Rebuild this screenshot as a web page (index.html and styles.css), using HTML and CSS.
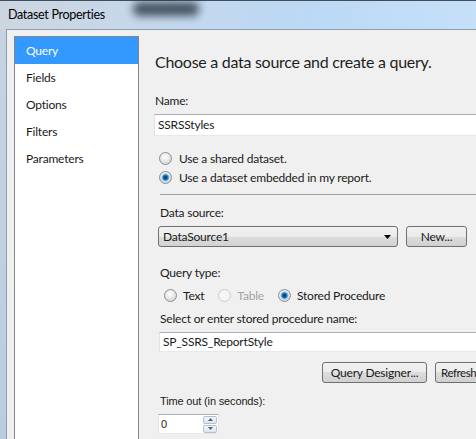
FILE: index.html
```html
<!DOCTYPE html>
<html>
<head>
<meta charset="utf-8">
<title>Dataset Properties</title>
<link rel="stylesheet" href="styles.css">
</head>
<body>
<div class="window">
  <div class="titlebar">
    <span class="title">Dataset Properties</span>
    <span class="blur"></span>
  </div>
  <div class="frame">
    <div class="client">
      <ul class="nav">
        <li class="nav-item selected">Query</li>
        <li class="nav-item">Fields</li>
        <li class="nav-item">Options</li>
        <li class="nav-item">Filters</li>
        <li class="nav-item">Parameters</li>
      </ul>
      <div class="content">
        <h1 class="heading">Choose a data source and create a query.</h1>
        <div class="label name-label">Name:</div>
        <div class="textbox name-box">SSRSStyles</div>
        <div class="radio-list">
          <div class="radio-row"><span class="radio"></span><span>Use a shared dataset.</span></div>
          <div class="radio-row"><span class="radio on"></span><span>Use a dataset embedded in my report.</span></div>
        </div>
        <div class="separator"></div>
        <div class="section">
          <div class="label ds-label">Data source:</div>
          <div class="ds-row">
            <div class="combo"><span>DataSource1</span>
              <svg class="combo-arrow" width="7" height="4" viewBox="0 0 7 4"><polygon points="0,0 7,0 3.5,4" fill="#000"/></svg>
            </div>
            <div class="button new-btn">New...</div>
          </div>
          <div class="label qt-label">Query type:</div>
          <div class="qt-row">
            <div class="radio-opt"><span class="radio"></span><span>Text</span></div>
            <div class="radio-opt disabled"><span class="radio dis"></span><span>Table</span></div>
            <div class="radio-opt"><span class="radio on"></span><span>Stored Procedure</span></div>
          </div>
          <div class="label sp-label">Select or enter stored procedure name:</div>
          <div class="textbox sp-box">SP_SSRS_ReportStyle</div>
          <div class="btn-row">
            <div class="button qd-btn">Query Designer...</div>
            <div class="button rf-btn"><span>Refresh</span></div>
          </div>
          <div class="label ms-label">Time out (in seconds):</div>
          <div class="spin">
            <span class="spin-val">0</span>
            <div class="spin-btns">
              <div class="spin-btn"><svg width="5" height="3" viewBox="0 0 5 3"><polygon points="0,3 5,3 2.5,0" fill="#4d617d"/></svg></div>
              <div class="spin-btn"><svg width="5" height="3" viewBox="0 0 5 3"><polygon points="0,0 5,0 2.5,3" fill="#4d617d"/></svg></div>
            </div>
          </div>
        </div>
      </div>
    </div>
  </div>
</div>
</body>
</html>
```
FILE: styles.css
```css
html, body {
  margin: 0;
  padding: 0;
}
body {
  width: 476px;
  height: 439px;
  overflow: hidden;
  font-family: Lato, "Liberation Sans", sans-serif;
  font-size: 12px;
  letter-spacing: -0.2px;
  color: #1a1a1a;
  background: #c9d5e1;
}
.window {
  width: 530px;
  height: 439px;
  display: flex;
  flex-direction: column;
  background: linear-gradient(to bottom, #c8d4e0, #b9cde2);
}
.titlebar {
  height: 29px;
  box-sizing: border-box;
  border-top: 1px solid #3f4d5c;
  background: linear-gradient(to right, #ccd6e0 0%, #c3d8ee 35%, #bcd9f5 60%, #c9e2f9 100%);
  display: flex;
  align-items: center;
  padding-left: 8px;
  flex-shrink: 0;
}
.title {
  font-size: 12.5px;
  letter-spacing: -0.3px;
  color: #000;
  margin-top: -1px;
}
.blur {
  width: 66px;
  height: 14px;
  margin-left: 28px;
  align-self: flex-start;
  margin-top: 1px;
  border-radius: 6px;
  background: #2f3c49;
  filter: blur(4px);
  opacity: 0.85;
}
.frame {
  flex: 1;
  display: flex;
  padding-left: 6px;
}
.client {
  flex: 1;
  display: flex;
  align-items: flex-start;
  background: #f0f0f0;
  border-top: 1px solid #8d9db0;
  border-left: 1px solid #8d9db0;
  padding: 6px 0 0 7px;
}
.nav {
  list-style: none;
  margin: 0;
  padding: 0;
  width: 125px;
  height: 420px;
  box-sizing: border-box;
  border: 1px solid #828790;
  background: #fff;
  flex-shrink: 0;
}
.nav-item {
  height: 27px;
  line-height: 27px;
  padding-left: 11px;
  color: #1a1a1a;
}
.nav-item.selected {
  background: #3399ff;
  color: #fff;
}
.content {
  flex: 1;
  padding: 0 20px 0 15px;
}
.heading {
  margin: 16px 0 0 0;
  font-weight: normal;
  font-size: 16px;
  letter-spacing: -0.28px;
  line-height: 20px;
  color: #1e1e1e;
  padding-left: 1px;
}
.label {
  line-height: 16px;
  height: 16px;
}
.name-label {
  margin-top: 21px;
  padding-left: 1px;
}
.textbox {
  box-sizing: border-box;
  background: #fff;
  border: 1px solid;
  border-color: #abadb3 #e3e9ef #e3e9ef #e2e3ea;
  padding-left: 3px;
}
.name-box {
  margin-top: 5px;
  height: 22px;
  line-height: 20px;
}
.radio-list {
  margin-top: 13px;
  padding-left: 5px;
}
.radio-row {
  height: 19px;
  display: flex;
  align-items: center;
  gap: 7px;
}
.radio {
  width: 13px;
  height: 13px;
  box-sizing: border-box;
  border-radius: 50%;
  border: 1px solid #8c8e90;
  background: radial-gradient(circle at 45% 35%, #ffffff 0, #e8e8e8 45%, #c9cacc 100%);
  flex-shrink: 0;
}
.radio.on {
  background:
    radial-gradient(circle at 50% 50%, #0b3a62 0, #12528a 1.5px, #2b86cc 2.6px, #7cc0ee 3.4px, #b6dcf5 3.9px, rgba(255,255,255,0) 4.4px),
    radial-gradient(circle at 45% 35%, #ffffff 0, #e8e8e8 45%, #c9cacc 100%);
}
.radio.dis {
  border-color: #cacbcc;
  background: #f5f5f5;
}
.separator {
  margin: 7px 0 0 6px;
  height: 1px;
  background: #a0a0a0;
}
.section {
  padding-left: 4px;
}
.section .label {
  padding-left: 2px;
}
.ds-label {
  margin-top: 10px;
}
.ds-row {
  margin-top: 5px;
  display: flex;
  gap: 8px;
}
.combo {
  width: 240px;
  height: 21px;
  box-sizing: border-box;
  border: 1px solid #707070;
  border-radius: 3px;
  background: linear-gradient(to bottom, #f2f2f2 0%, #ebebeb 50%, #dddddd 50%, #d2d2d2 100%);
  display: flex;
  align-items: center;
  justify-content: space-between;
  padding: 0 6px 0 4px;
}
.combo-arrow {
  display: block;
}
.button {
  height: 21px;
  box-sizing: border-box;
  border: 1px solid #707070;
  border-radius: 3px;
  background: linear-gradient(to bottom, #f2f2f2 0%, #ebebeb 50%, #dddddd 50%, #d0d0d0 100%);
  display: flex;
  align-items: center;
  justify-content: center;
  white-space: nowrap;
  overflow: hidden;
}
.new-btn {
  width: 61px;
}
.qt-label {
  margin-top: 18px;
}
.qt-row {
  margin-top: 5px;
  height: 19px;
  display: flex;
  align-items: center;
  gap: 14px;
  padding-left: 6px;
}
.radio-opt {
  display: flex;
  align-items: center;
  gap: 6px;
}
.radio-opt.disabled {
  color: #a3a3a3;
}
.sp-label {
  margin-top: 6px;
}
.sp-box {
  margin-top: 5px;
  margin-left: 1px;
  height: 20px;
  line-height: 18px;
}
.btn-row {
  margin-top: 10px;
  display: flex;
  gap: 8px;
  padding-left: 164px;
}
.qd-btn {
  width: 105px;
}
.rf-btn {
  width: 76px;
  justify-content: flex-start;
  padding-left: 5px;
  font-size: 11.5px;
  letter-spacing: -0.45px;
}
.ms-label {
  margin-top: 10px;
  font-family: "Liberation Sans", Arial, sans-serif;
  font-size: 11px;
  letter-spacing: -0.15px;
}
.spin {
  margin-top: 5px;
  width: 61px;
  height: 20px;
  box-sizing: border-box;
  border: 1px solid;
  border-color: #abadb3 #e3e9ef #e3e9ef #e2e3ea;
  background: #fff;
  display: flex;
  align-items: center;
  justify-content: space-between;
  padding: 0 1px 0 2px;
  font-family: "Liberation Sans", Arial, sans-serif;
  font-size: 11px;
}
.spin-btns {
  display: flex;
  flex-direction: column;
  gap: 1px;
}
.spin-btn {
  width: 14px;
  height: 8px;
  box-sizing: border-box;
  border: 1px solid #b4c0d0;
  border-radius: 2px;
  background: linear-gradient(to bottom, #f4f7fb, #dde5ef);
  display: flex;
  align-items: center;
  justify-content: center;
}
.spin-btn svg {
  display: block;
}
```
